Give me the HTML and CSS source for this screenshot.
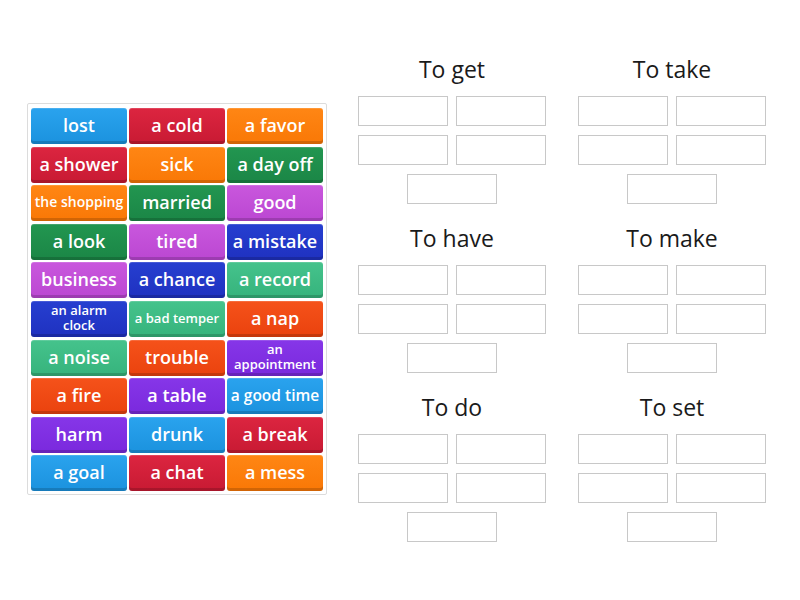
FILE: index.html
```html
<!DOCTYPE html>
<html>
<head>
<meta charset="utf-8">
<link rel="stylesheet" href="styles.css">
</head>
<body>
<div class="page">
  <div class="bank">
    <div class="tile blue">lost</div>
    <div class="tile red">a cold</div>
    <div class="tile orange">a favor</div>
    <div class="tile red">a shower</div>
    <div class="tile orange">sick</div>
    <div class="tile green">a day off</div>
    <div class="tile orange sm">the shopping</div>
    <div class="tile green">married</div>
    <div class="tile magenta">good</div>
    <div class="tile green">a look</div>
    <div class="tile magenta">tired</div>
    <div class="tile navy">a mistake</div>
    <div class="tile magenta">business</div>
    <div class="tile navy">a chance</div>
    <div class="tile teal">a record</div>
    <div class="tile navy two">an alarm<br>clock</div>
    <div class="tile teal xs">a bad temper</div>
    <div class="tile vermilion">a nap</div>
    <div class="tile teal">a noise</div>
    <div class="tile vermilion">trouble</div>
    <div class="tile violet two">an<br>appointment</div>
    <div class="tile vermilion">a fire</div>
    <div class="tile violet">a table</div>
    <div class="tile blue md">a good time</div>
    <div class="tile violet">harm</div>
    <div class="tile blue">drunk</div>
    <div class="tile red">a break</div>
    <div class="tile blue">a goal</div>
    <div class="tile red">a chat</div>
    <div class="tile orange">a mess</div>
  </div>
  <div class="groups">
    <div class="group"><h2>To get</h2><div class="slots"><div class="slot"></div><div class="slot"></div><div class="slot"></div><div class="slot"></div><div class="slot last"></div></div></div>
    <div class="group"><h2>To take</h2><div class="slots"><div class="slot"></div><div class="slot"></div><div class="slot"></div><div class="slot"></div><div class="slot last"></div></div></div>
    <div class="group"><h2>To have</h2><div class="slots"><div class="slot"></div><div class="slot"></div><div class="slot"></div><div class="slot"></div><div class="slot last"></div></div></div>
    <div class="group"><h2>To make</h2><div class="slots"><div class="slot"></div><div class="slot"></div><div class="slot"></div><div class="slot"></div><div class="slot last"></div></div></div>
    <div class="group"><h2>To do</h2><div class="slots"><div class="slot"></div><div class="slot"></div><div class="slot"></div><div class="slot"></div><div class="slot last"></div></div></div>
    <div class="group"><h2>To set</h2><div class="slots"><div class="slot"></div><div class="slot"></div><div class="slot"></div><div class="slot"></div><div class="slot last"></div></div></div>
  </div>
</div>
</body>
</html>
```

FILE: styles.css
```css
html, body {
  margin: 0;
  padding: 0;
  background: #fff;
  font-family: "Open Sans", "Liberation Sans", sans-serif;
}
.page {
  display: flex;
  align-items: flex-start;
  width: 800px;
  height: 600px;
}
.bank {
  margin-left: 27px;
  margin-top: 103px;
  width: 292px;
  padding: 4px 3px 3px 3px;
  border: 1px solid #dcdcdc;
  border-radius: 2px;
  display: grid;
  grid-template-columns: repeat(3, 96px);
  grid-auto-rows: 36px;
  column-gap: 2px;
  row-gap: 2.6px;
}
.tile {
  display: flex;
  align-items: center;
  justify-content: center;
  text-align: center;
  color: #fff;
  font-weight: 600;
  font-size: 18px;
  line-height: 20px;
  border-radius: 3px;
  box-shadow: inset 0 -3px 0 rgba(0,0,0,0.16), inset 0 1px 0 rgba(255,255,255,0.15);
  padding-bottom: 2px;
  box-sizing: border-box;
  white-space: nowrap;
}
.tile.sm { font-size: 14px; }
.tile.xs { font-size: 13px; }
.tile.md { font-size: 15.5px; }
.tile.two { font-size: 13px; line-height: 15px; }
.blue { background: linear-gradient(#2aa3ee, #1b92de); }
.red { background: linear-gradient(#dc2540, #c81a33); }
.orange { background: linear-gradient(#ff8614, #f97806); }
.green { background: linear-gradient(#229650, #1b8646); }
.magenta { background: linear-gradient(#c957dd, #bb47d2); }
.navy { background: linear-gradient(#263fd0, #1f31c0); }
.teal { background: linear-gradient(#45c38c, #36b37c); }
.vermilion { background: linear-gradient(#f5521a, #ea420e); }
.violet { background: linear-gradient(#8636e8, #7a29dd); }

.groups {
  margin-left: 31px;
  margin-top: 54px;
  display: grid;
  grid-template-columns: repeat(2, 188px);
  column-gap: 32px;
  row-gap: 19px;
}
.group h2 {
  margin: 0 0 12px 0;
  font-size: 23px;
  line-height: 30px;
  font-weight: 400;
  color: #1a1a1a;
  text-align: center;
}
.slots {
  display: grid;
  grid-template-columns: 90px 90px;
  column-gap: 8px;
  row-gap: 9px;
}
.slot {
  height: 30px;
  box-sizing: border-box;
  border: 1px solid #c8c8c8;
  background: #fff;
}
.slot.last {
  grid-column: 1 / span 2;
  justify-self: center;
  width: 90px;
}
```
